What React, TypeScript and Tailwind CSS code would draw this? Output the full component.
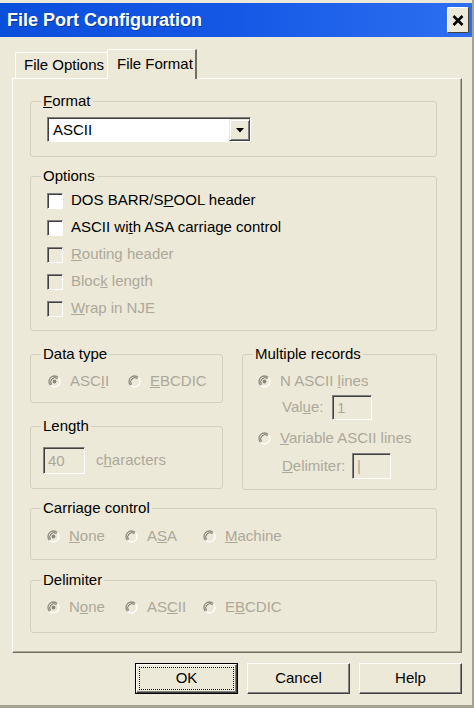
import React from "react";

function Radio({ checked }: { checked?: boolean }) {
  return (
    <svg width="13" height="13" viewBox="0 0 13 13" className="shrink-0">
      <circle cx="6.5" cy="6.5" r="5.5" fill="#ece9d8" />
      <path d="M2.6 10.4 A5.5 5.5 0 0 1 10.4 2.6" stroke="#8d8b80" strokeWidth="1.3" fill="none" />
      <path d="M3.5 9.5 A4.3 4.3 0 0 1 9.5 3.5" stroke="#5e5c52" strokeWidth="0.9" fill="none" />
      <path d="M10.4 2.6 A5.5 5.5 0 0 1 2.6 10.4" stroke="#ffffff" strokeWidth="1.3" fill="none" />
      {checked && <circle cx="6.5" cy="6.5" r="1.9" fill="#8a8778" />}
    </svg>
  );
}

function RadioItem({ checked, children, className }: { checked?: boolean; children: React.ReactNode; className?: string }) {
  return (
    <div className={`flex items-center h-[20px] gap-[9px] ${className ?? ""}`}>
      <Radio checked={checked} />
      <span className="text-[#aca899]">{children}</span>
    </div>
  );
}

function Check({ disabled, children }: { disabled?: boolean; children: React.ReactNode }) {
  return (
    <div className="flex items-center h-[27px] gap-[8px]">
      <span
        className={`w-[16px] h-[16px] shrink-0 border border-[#808080] border-r-white border-b-white shadow-[inset_1px_1px_0_#404040] ${
          disabled ? "bg-[#ece9d8]" : "bg-white"
        }`}
      />
      <span className={disabled ? "text-[#aca899]" : "text-black"}>{children}</span>
    </div>
  );
}

function Group({
  title,
  className,
  contentClass,
  children,
}: {
  title: React.ReactNode;
  className?: string;
  contentClass?: string;
  children: React.ReactNode;
}) {
  return (
    <fieldset className={`border border-[#d0d0bf] rounded-[3px] ${className ?? ""}`}>
      <legend className="ml-[10px] px-[2px] leading-[18px] text-black">{title}</legend>
      <div className={contentClass}>{children}</div>
    </fieldset>
  );
}

function Sunken({ className, children }: { className?: string; children?: React.ReactNode }) {
  return (
    <div
      className={`border border-[#808080] border-r-white border-b-white shadow-[inset_1px_1px_0_#404040] bg-[#ece9d8] text-[#aca899] pl-[4px] ${className ?? ""}`}
    >
      {children}
    </div>
  );
}

function Button({ children, isDefault }: { children: React.ReactNode; isDefault?: boolean }) {
  if (isDefault) {
    return (
      <div className="w-[103px] h-[31px] border border-black flex">
        <div className="flex-1 flex border border-white border-r-[#404040] border-b-[#404040] shadow-[inset_-1px_-1px_0_#808080] p-[2px]">
          <div className="flex-1 flex items-center justify-center border border-dotted border-black">{children}</div>
        </div>
      </div>
    );
  }
  return (
    <div className="w-[103px] h-[31px] flex items-center justify-center border border-white border-r-[#404040] border-b-[#404040] shadow-[inset_-1px_-1px_0_#808080]">
      {children}
    </div>
  );
}

export default function App() {
  return (
    <div className="w-[474px] h-[708px] bg-[#ece9d8] [font-family:'Liberation_Sans',Arial,sans-serif] text-[15px] text-black flex flex-col pt-[3px] border-r-[2px] border-b-[3px] border-[#a5a292] overflow-hidden">
      {/* Title bar */}
      <div className="h-[34px] shrink-0 flex items-center pl-[7px] pr-[3px] bg-gradient-to-r from-[#0a4fdb] via-[#1558e6] to-[#2d6ff0]">
        <span className="text-white font-bold text-[18px] leading-none [text-shadow:1px_1px_0_#0b3a9c]">
          File Port Configuration
        </span>
        <div className="ml-auto w-[22px] h-[26px] flex items-center justify-center bg-[#ece9d8] border border-white border-r-[#404040] border-b-[#404040] rounded-[2px]">
          <svg width="12" height="11" viewBox="0 0 12 11">
            <path d="M1.5 1 L10.5 10 M10.5 1 L1.5 10" stroke="#000" strokeWidth="2.6" />
          </svg>
        </div>
      </div>

      <div className="flex flex-col pl-[12px] pr-[10px]">
        {/* Tabs */}
        <div className="flex items-end pl-[3px] mt-[12px]">
          <div className="w-[92px] h-[26px] flex items-center pl-[8px] border-t border-l border-white rounded-tl-[2px]">
            File Options
          </div>
          <div className="relative z-10 -mb-[1px] w-[90px] h-[30px] flex items-start pt-[3px] pl-[9px] bg-[#ece9d8] border-t border-l border-white border-r-2 border-r-[#716f64] rounded-tl-[2px]">
            File Format
          </div>
        </div>

        {/* Panel */}
        <div className="h-[575px] flex flex-col pl-[17px] pt-[13px] border border-white border-r-[#716f64] border-b-[#716f64] shadow-[inset_-1px_-1px_0_#aca899]">
          <Group title={<><u>F</u>ormat</>} className="w-[407px]" contentClass="pl-[16px] pt-[7px] pb-[14px]">
            <div className="w-[204px] h-[25px] flex border border-[#808080] border-r-white border-b-white shadow-[inset_1px_1px_0_#404040] bg-white">
              <span className="flex-1 pl-[5px] leading-[23px]">ASCII</span>
              <div className="w-[21px] mt-[1px] flex items-center justify-center bg-[#ece9d8] border border-[#ece9d8] border-r-[#404040] border-b-[#404040] shadow-[inset_1px_1px_0_#fff,inset_-1px_-1px_0_#808080]">
                <svg width="8" height="5" viewBox="0 0 8 5">
                  <path d="M0 0 H8 L4 4.5 Z" fill="#000" />
                </svg>
              </div>
            </div>
          </Group>

          <Group title="Options" className="w-[407px] mt-[10px]" contentClass="pl-[16px] pt-[2px] pb-[8px]">
            <Check>
              DOS BARR/S<u>P</u>OOL header
            </Check>
            <Check>
              ASCII wi<u>t</u>h ASA carriage control
            </Check>
            <Check disabled>
              <u>R</u>outing header
            </Check>
            <Check disabled>
              Bloc<u>k</u> length
            </Check>
            <Check disabled>
              <u>W</u>rap in NJE
            </Check>
          </Group>

          <div className="flex w-[407px] gap-[19px] mt-[14px]">
            <div className="w-[193px] flex flex-col">
              <Group title="Data type" contentClass="flex pl-[17px] pt-[8px] pb-[11px]">
                <RadioItem checked className="w-[80px]">
                  ASC<u>I</u>I
                </RadioItem>
                <RadioItem>
                  <u>E</u>BCDIC
                </RadioItem>
              </Group>
              <Group title="Length" className="mt-[14px]" contentClass="flex items-center pl-[12px] pt-[12px] pb-[14px]">
                <Sunken className="w-[42px] h-[27px] leading-[25px]">40</Sunken>
                <span className="ml-[11px] text-[#aca899]">
                  c<u>h</u>aracters
                </span>
              </Group>
            </div>
            <Group title="Multiple records" className="flex-1" contentClass="pl-[15px] pt-[8px] pb-[10px]">
              <RadioItem checked>
                N ASCII <u>l</u>ines
              </RadioItem>
              <div className="flex items-center mt-[4px] pl-[24px]">
                <span className="w-[50px] text-[#aca899]">
                  Val<u>u</u>e:
                </span>
                <Sunken className="w-[40px] h-[25px] leading-[23px]">1</Sunken>
              </div>
              <RadioItem className="mt-[8px]">
                <u>V</u>ariable ASCII lines
              </RadioItem>
              <div className="flex items-center mt-[5px] pl-[24px]">
                <span className="w-[70px] text-[#aca899]">
                  <u>D</u>elimiter:
                </span>
                <Sunken className="w-[39px] h-[26px] leading-[24px]">|</Sunken>
              </div>
            </Group>
          </div>

          <Group title="Carriage control" className="w-[407px] mt-[9px]" contentClass="flex pl-[16px] pt-[9px] pb-[13px]">
            <RadioItem checked className="w-[78px]">
              <u>N</u>one
            </RadioItem>
            <RadioItem className="w-[78px]">
              A<u>S</u>A
            </RadioItem>
            <RadioItem>
              <u>M</u>achine
            </RadioItem>
          </Group>

          <Group title="Delimiter" className="w-[407px] mt-[11px]" contentClass="flex pl-[16px] pt-[8px] pb-[15px]">
            <RadioItem checked className="w-[78px]">
              N<u>o</u>ne
            </RadioItem>
            <RadioItem className="w-[78px]">
              AS<u>C</u>II
            </RadioItem>
            <RadioItem>
              E<u>B</u>CDIC
            </RadioItem>
          </Group>
        </div>

        {/* Buttons */}
        <div className="flex justify-end gap-[9px] mt-[10px]">
          <Button isDefault>OK</Button>
          <Button>Cancel</Button>
          <Button>Help</Button>
        </div>
      </div>
    </div>
  );
}
